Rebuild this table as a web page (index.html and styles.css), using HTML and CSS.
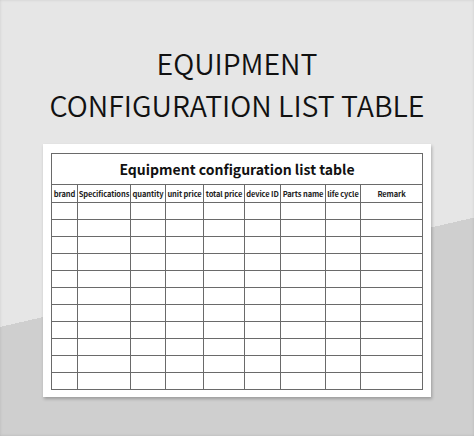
FILE: index.html
```html
<!DOCTYPE html>
<html>
<head>
<meta charset="utf-8">
<link rel="stylesheet" href="styles.css">
</head>
<body>
<div class="page">
  <h1 class="heading">EQUIPMENT<br>CONFIGURATION LIST TABLE</h1>
  <div class="card">
    <table class="sheet">
      <colgroup>
        <col style="width:26px"><col style="width:53px"><col style="width:35px"><col style="width:38px"><col style="width:41px"><col style="width:36px"><col style="width:45px"><col style="width:35px"><col style="width:62px">
      </colgroup>
      <thead>
        <tr><th class="title" colspan="9">Equipment configuration list table</th></tr>
        <tr class="head">
          <th>brand</th><th>Specifications</th><th>quantity</th><th>unit price</th><th>total price</th><th>device ID</th><th>Parts name</th><th>life cycle</th><th>Remark</th>
        </tr>
      </thead>
      <tbody>
        <tr><td></td><td></td><td></td><td></td><td></td><td></td><td></td><td></td><td></td></tr>
        <tr><td></td><td></td><td></td><td></td><td></td><td></td><td></td><td></td><td></td></tr>
        <tr><td></td><td></td><td></td><td></td><td></td><td></td><td></td><td></td><td></td></tr>
        <tr><td></td><td></td><td></td><td></td><td></td><td></td><td></td><td></td><td></td></tr>
        <tr><td></td><td></td><td></td><td></td><td></td><td></td><td></td><td></td><td></td></tr>
        <tr><td></td><td></td><td></td><td></td><td></td><td></td><td></td><td></td><td></td></tr>
        <tr><td></td><td></td><td></td><td></td><td></td><td></td><td></td><td></td><td></td></tr>
        <tr><td></td><td></td><td></td><td></td><td></td><td></td><td></td><td></td><td></td></tr>
        <tr><td></td><td></td><td></td><td></td><td></td><td></td><td></td><td></td><td></td></tr>
        <tr><td></td><td></td><td></td><td></td><td></td><td></td><td></td><td></td><td></td></tr>
        <tr><td></td><td></td><td></td><td></td><td></td><td></td><td></td><td></td><td></td></tr>
      </tbody>
    </table>
  </div>
</div>
</body>
</html>
```

FILE: styles.css
```css
html, body {
  margin: 0;
  padding: 0;
}
body {
  width: 474px;
  height: 436px;
  overflow: hidden;
  font-family: "Noto Sans CJK SC", "Noto Sans", sans-serif;
}
.page {
  width: 474px;
  height: 436px;
  box-sizing: border-box;
  padding-top: 42px;
  background: linear-gradient(167deg, #e6e6e6 318.6px, #cfcfcf 318.6px);
  box-shadow: inset 0 0 3px rgba(0,0,0,0.12);
}
.heading {
  margin: 0;
  font-size: 28.5px;
  font-weight: 350;
  line-height: 42px;
  text-align: center;
  color: #111;
  letter-spacing: 0;
}
.card {
  margin: 18px 0 0 43px;
  width: 388px;
  height: 253px;
  box-sizing: border-box;
  padding: 9px 8px 8px 8px;
  background: #fff;
  box-shadow: 1px 2px 3px rgba(0,0,0,0.25);
}
.sheet {
  border-collapse: collapse;
  table-layout: fixed;
  width: 372px;
}
.sheet th, .sheet td {
  border: 1px solid #6a6a6a;
  padding: 0;
  text-align: center;
  overflow: hidden;
  white-space: nowrap;
}
.sheet .title {
  height: 30px;
  font-size: 14px;
  font-weight: 700;
  color: #111;
}
.head th {
  height: 17px;
  font-size: 7.5px;
  font-weight: 700;
  color: #222;
  letter-spacing: -0.1px;
}
.sheet td {
  height: 16px;
}
```
